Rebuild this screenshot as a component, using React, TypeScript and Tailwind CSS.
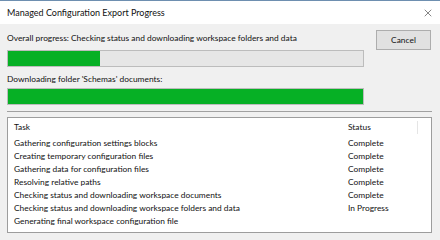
import { X } from 'lucide-react'

const tasks = [
  { name: 'Gathering configuration settings blocks', status: 'Complete' },
  { name: 'Creating temporary configuration files', status: 'Complete' },
  { name: 'Gathering data for configuration files', status: 'Complete' },
  { name: 'Resolving relative paths', status: 'Complete' },
  { name: 'Checking status and downloading workspace documents', status: 'Complete' },
  { name: 'Checking status and downloading workspace folders and data', status: 'In Progress' },
  { name: 'Generating final workspace configuration file', status: '' },
]

function ProgressBar({ value }: { value: number }) {
  return (
    <div className="h-[17px] w-[357px] border border-[#bcbcbc] bg-[#e6e6e6]">
      <div className="h-full bg-[#06b025]" style={{ width: `${value}%` }} />
    </div>
  )
}

export default function App() {
  return (
    <div className="flex h-[240px] w-[440px] flex-col overflow-hidden bg-[#f0f0f0] font-['Lato',sans-serif] text-[8.4px] leading-[13px] text-[#111]">
      <div className="flex h-[24px] shrink-0 items-center justify-between border-t border-[#6e8fb0] bg-white pl-[7px] pr-[6px]">
        <span className="text-[9px]">Managed Configuration Export Progress</span>
        <X size={12} strokeWidth={1.2} className="text-[#333]" />
      </div>

      <div className="flex flex-col px-[7px] pt-[8px]">
        <div className="flex justify-between">
          <div className="flex flex-col">
            <span>Overall progress: Checking status and downloading workspace folders and data</span>
            <div className="mt-[5px]">
              <ProgressBar value={26} />
            </div>
          </div>
          <button className="mr-[2px] mt-[-2px] h-[20px] w-[55px] border border-[#adadad] bg-[#e1e1e1] text-[8.4px]">
            Cancel
          </button>
        </div>

        <span className="mt-[6px]">Downloading folder 'Schemas' documents:</span>
        <div className="mt-[2px]">
          <ProgressBar value={100} />
        </div>

        <div className="mt-[6px] h-px w-[425px] bg-[#a0a0a0]" />

        <div className="mt-[5px] h-[116px] w-[425px] border border-[#9d9d9d] bg-white">
          <div className="flex h-[19px] items-center">
            <span className="w-[334px] pl-[6px]">Task</span>
            <span className="w-[76px] border-r border-[#e5e5e5] pl-[6px]">Status</span>
          </div>
          {tasks.map((t) => (
            <div key={t.name} className="flex h-[13px] items-center">
              <span className="w-[334px] whitespace-nowrap pl-[6px]">{t.name}</span>
              <span className="pl-[6px]">{t.status}</span>
            </div>
          ))}
        </div>
      </div>
    </div>
  )
}
